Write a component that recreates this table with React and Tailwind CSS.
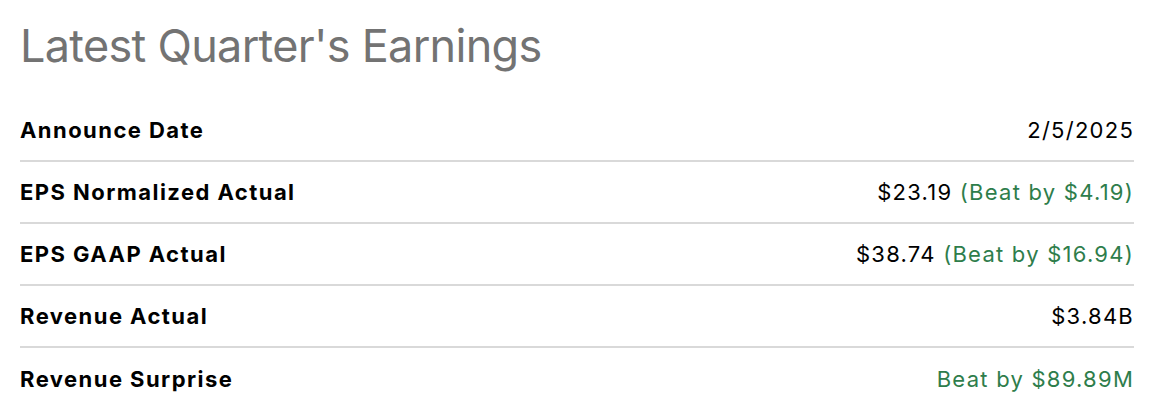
const rows = [
  { label: "Announce Date", value: "2/5/2025" },
  { label: "EPS Normalized Actual", value: "$23.19", beat: "(Beat by $4.19)" },
  { label: "EPS GAAP Actual", value: "$38.74", beat: "(Beat by $16.94)" },
  { label: "Revenue Actual", value: "$3.84B" },
  { label: "Revenue Surprise", beat: "Beat by $89.89M" },
];

export default function App() {
  return (
    <div className="bg-white min-h-screen pt-[19px] pl-5 pr-[42px] font-['Inter',sans-serif]">
      <h1 className="text-[45px] leading-[54px] font-normal tracking-[-0.7px] text-[#737373] mb-[27px]">Latest Quarter's Earnings</h1>
      <div>
        {rows.map((r, i) => (
          <div
            key={r.label}
            className={
              "flex items-center justify-between h-[62px] text-[22px] " +
              (i < rows.length - 1 ? "border-b-2 border-[#d9d9d9]" : "")
            }
          >
            <span className="font-bold tracking-[1.45px] text-black">{r.label}</span>
            <span className="tracking-[1.25px] text-black">
              {r.value}
              {r.value && r.beat ? " " : ""}
              {r.beat && <span className="text-[#2e7d4b]">{r.beat}</span>}
            </span>
          </div>
        ))}
      </div>
    </div>
  );
}
